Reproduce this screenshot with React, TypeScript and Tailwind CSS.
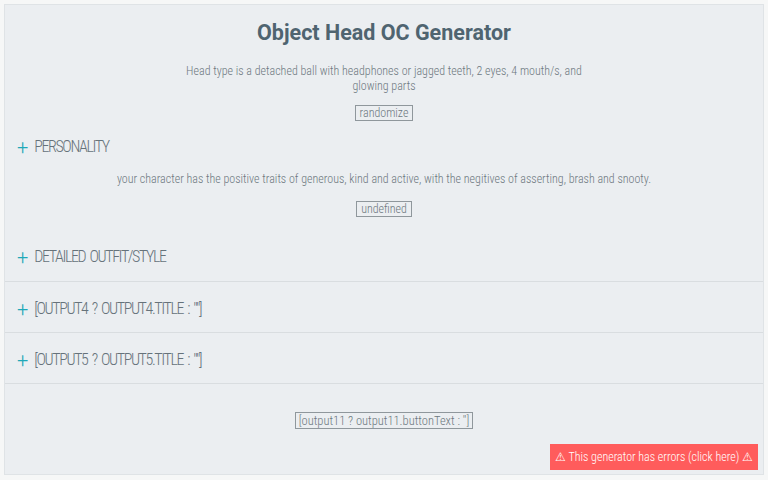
export default function App() {
  const sections = ["DETAILED OUTFIT/STYLE", "[OUTPUT4 ? OUTPUT4.TITLE : \"\"]", "[OUTPUT5 ? OUTPUT5.TITLE : \"\"]"];

  const cond = { fontFamily: "Roboto, 'Liberation Sans', sans-serif", fontStretch: "75%" };
  const head = { ...cond, letterSpacing: "-1.4px", wordSpacing: "2px" };

  return (
    <div className="min-h-screen bg-[#f6f7f7] p-[4px]" style={{ fontFamily: "Roboto, sans-serif" }}>
      <div className="border border-[#dfe3e6] bg-[#ebeef1] min-h-[471px] flex flex-col">
        {/* Title */}
        <div className="flex flex-col items-center pt-[13px] pb-[1px]">
          <h1 className="text-[21.5px] leading-[30px] font-bold text-[#4f6470]">Object Head OC Generator</h1>
          <p className="mt-[16px] text-[12px] leading-[15px] font-light text-[#6d7880] text-center w-[420px]" style={cond}>
            Head type is a detached ball with headphones or jagged teeth, 2 eyes, 4 mouth/s, and glowing parts
          </p>
          <button className="mt-[11px] border border-[#8f979c] px-[4px] text-[12px] leading-[14px] font-light text-[#6d7880]" style={cond}>
            randomize
          </button>
        </div>

        {/* Personality */}
        <div className="flex flex-col">
          <div className="flex items-center h-[49px] pt-[1px] px-[12px] gap-[6px]">
            <span className="text-[#1ea8b8] text-[20px] leading-none font-light">+</span>
            <span className="text-[16px] font-light text-[#66727a] uppercase" style={head}>Personality</span>
          </div>
          <p className="mt-[1px] text-center text-[12px] leading-[15px] font-light text-[#6d7880]" style={cond}>
            your character has the positive traits of generous, kind and active, with the negitives of asserting, brash and snooty.
          </p>
          <div className="flex justify-center mt-[14px] mb-[13px]">
            <button className="border border-[#8f979c] px-[4px] text-[12px] leading-[14px] font-light text-[#6d7880]" style={cond}>
              undefined
            </button>
          </div>
        </div>

        {sections.map((s, i) => (
          <div key={i} className={`flex items-center h-[51px] pt-[3px] px-[12px] gap-[6px] ${i > 0 ? "border-t border-[#d9dde0]" : ""}`}>
            <span className="text-[#1ea8b8] text-[20px] leading-none font-light">+</span>
            <span className="text-[16px] font-light text-[#66727a]" style={head}>{s}</span>
          </div>
        ))}

        <div className="border-t border-[#d9dde0] flex-1 flex justify-center items-start pt-[28px]">
          <button className="border border-[#8f979c] px-[3px] text-[12.5px] leading-[15px] font-light text-[#6d7880]" style={cond}>
            [output11 ? output11.buttonText : '']
          </button>
        </div>
      </div>

      <button className="fixed right-[10px] bottom-[10px] bg-[#ff5c5c] text-white text-[12px] font-light px-[5px] h-[26px] flex items-center" style={cond}>
        ⚠ This generator has errors (click here) ⚠
      </button>
    </div>
  );
}
